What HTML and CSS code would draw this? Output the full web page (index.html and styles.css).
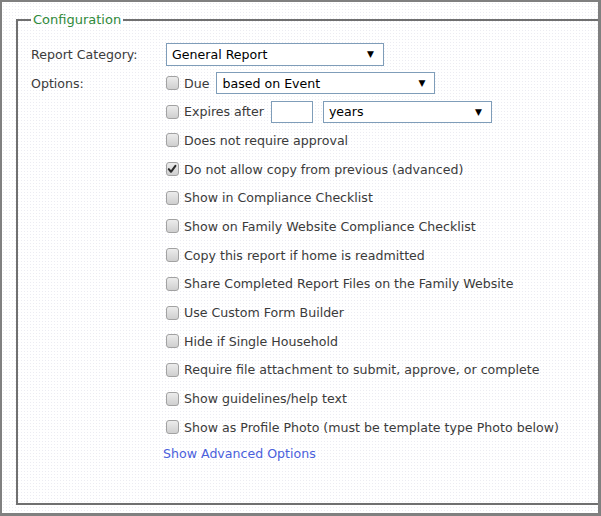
FILE: index.html
```html
<!DOCTYPE html>
<html>
<head>
<meta charset="utf-8">
<link rel="stylesheet" href="styles.css">
</head>
<body>
<div class="frame">
  <fieldset class="config">
    <legend class="config-title">Configuration</legend>
    <div class="rows">
      <div class="row">
        <div class="label">Report Category:</div>
        <div class="value">
          <div class="select select-category"><span>General Report</span><span class="arrow">▼</span></div>
        </div>
      </div>
      <div class="row">
        <div class="label">Options:</div>
        <div class="value">
          <span class="cb"></span><span class="txt txt-due">Due</span>
          <div class="select select-due"><span>based on Event</span><span class="arrow">▼</span></div>
        </div>
      </div>
      <div class="row">
        <div class="label"></div>
        <div class="value">
          <span class="cb"></span><span class="txt txt-exp">Expires after</span>
          <div class="input"></div>
          <div class="select select-years"><span>years</span><span class="arrow">▼</span></div>
        </div>
      </div>
      <div class="row"><div class="label"></div><div class="value"><span class="cb"></span><span class="txt">Does not require approval</span></div></div>
      <div class="row"><div class="label"></div><div class="value"><span class="cb checked"><svg viewBox="0 0 13 14" width="13" height="14"><path d="M3 7.2 L5.4 10 L10.2 3.6" fill="none" stroke="#2b2b2b" stroke-width="2.2" stroke-linecap="round" stroke-linejoin="round"/></svg></span><span class="txt">Do not allow copy from previous (advanced)</span></div></div>
      <div class="row"><div class="label"></div><div class="value"><span class="cb"></span><span class="txt">Show in Compliance Checklist</span></div></div>
      <div class="row"><div class="label"></div><div class="value"><span class="cb"></span><span class="txt">Show on Family Website Compliance Checklist</span></div></div>
      <div class="row"><div class="label"></div><div class="value"><span class="cb"></span><span class="txt">Copy this report if home is readmitted</span></div></div>
      <div class="row"><div class="label"></div><div class="value"><span class="cb"></span><span class="txt">Share Completed Report Files on the Family Website</span></div></div>
      <div class="row"><div class="label"></div><div class="value"><span class="cb"></span><span class="txt">Use Custom Form Builder</span></div></div>
      <div class="row"><div class="label"></div><div class="value"><span class="cb"></span><span class="txt">Hide if Single Household</span></div></div>
      <div class="row"><div class="label"></div><div class="value"><span class="cb"></span><span class="txt">Require file attachment to submit, approve, or complete</span></div></div>
      <div class="row"><div class="label"></div><div class="value"><span class="cb"></span><span class="txt">Show guidelines/help text</span></div></div>
      <div class="row"><div class="label"></div><div class="value"><span class="cb"></span><span class="txt">Show as Profile Photo (must be template type Photo below)</span></div></div>
      <div class="row row-link"><div class="label"></div><div class="value"><a class="link" href="#">Show Advanced Options</a></div></div>
    </div>
  </fieldset>
</div>
</body>
</html>
```
FILE: styles.css
```css
html, body {
  margin: 0;
  padding: 0;
  overflow: hidden;
}
body {
  width: 601px;
  height: 516px;
  font-family: "DejaVu Sans", Verdana, sans-serif;
  font-size: 12.6px;
  color: #3b3b3b;
}
.frame {
  box-sizing: border-box;
  width: 601px;
  height: 516px;
  border-style: solid;
  border-color: #808080;
  border-width: 2px 3px 3px 2px;
  background-color: #ffffff;
  background-image: radial-gradient(circle, #ececf2 0.7px, transparent 0.9px);
  background-size: 3px 3px;
  overflow: hidden;
  padding: 10px 0 0 14px;
}
.config {
  box-sizing: border-box;
  margin: 0;
  width: 620px;
  height: 493px;
  border: 2px solid #707070;
  padding: 12px 0 0 13px;
  min-width: 0;
}
.config-title {
  color: #2f8a3a;
  font-size: 13px;
  padding: 0 2px;
  margin-left: 0;
  line-height: 16px;
}
.rows {
  display: flex;
  flex-direction: column;
}
.row {
  display: flex;
  align-items: center;
  height: 28.7px;
}
.row-link {
  height: 24px;
}
.label {
  width: 135px;
  flex: none;
}
.value {
  display: flex;
  align-items: center;
}
.cb {
  box-sizing: border-box;
  width: 13px;
  height: 14px;
  border: 1px solid #a2a2a2;
  border-radius: 3px;
  background: linear-gradient(#ececec, #cfcfcf);
  display: inline-flex;
  flex: none;
}
.cb svg {
  margin: -1px 0 0 -1px;
}
.txt {
  margin-left: 5px;
}
.txt-due {
  margin-right: 7px;
}
.txt-exp {
  margin-right: 7px;
}
.select {
  box-sizing: border-box;
  display: flex;
  align-items: center;
  justify-content: space-between;
  border: 1px solid #7f9db9;
  background: #ffffff;
  color: #000000;
  font-size: 12.6px;
  padding: 0 9px 0 5px;
}
.select-category {
  width: 218px;
  height: 23px;
}
.select-due {
  width: 219px;
  height: 22px;
}
.select-years {
  width: 169px;
  height: 22px;
}
.arrow {
  font-size: 9px;
}
.input {
  box-sizing: border-box;
  width: 42px;
  height: 22px;
  border: 1px solid #7f9db9;
  background: #ffffff;
  margin-right: 10px;
}
.link {
  color: #4a60dc;
  text-decoration: none;
  margin-left: -3px;
}
```
